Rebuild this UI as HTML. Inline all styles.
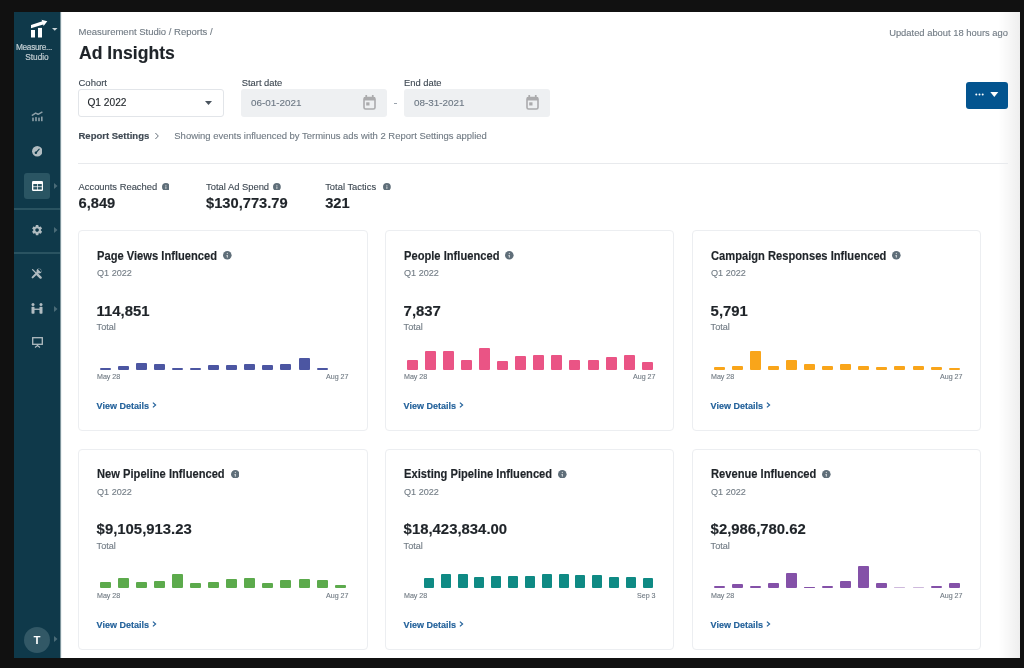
<!DOCTYPE html>
<html><head><meta charset="utf-8">
<style>
html,body{margin:0;padding:0;}
body{width:1024px;height:668px;background:#111;position:relative;overflow:hidden;font-family:"Liberation Sans",sans-serif;}
.t{position:absolute;line-height:1;white-space:nowrap;}
.a{position:absolute;display:block;}
.main{position:absolute;left:60px;top:12px;width:960px;height:646px;background:#fff;}
.shade{position:absolute;left:998px;top:12px;width:22px;height:646px;background:linear-gradient(to right,rgba(0,0,0,0),rgba(0,0,0,0.065));}
.side{position:absolute;left:14px;top:12px;width:46px;height:646px;background:#0f394a;}
.card{position:absolute;width:288px;height:199px;border:1px solid #eceef1;border-radius:4px;background:#fff;}
.bar{position:absolute;border-radius:1px;}
</style></head><body>
<div id="wrap" style="position:absolute;left:0;top:0;width:1024px;height:668px;filter:blur(0.35px)">
<div class="main"></div>
<div class="shade"></div>
<div class="side"></div>
<div class="a" style="left:60px;top:12px;width:1px;height:646px;background:#7d949c"></div>
<div class="a" style="left:61px;top:12px;width:1px;height:646px;background:#eef2f3"></div>
<div class="t" style="left:78.50px;top:26.76px;font-size:9.5px;color:#717b84;-webkit-text-stroke:0.12px currentColor;">Measurement Studio / Reports /</div>
<div class="t" style="left:78.50px;top:44.73px;font-size:17.8px;color:#1f2429;font-weight:700;transform:scale(0.99,1.0);transform-origin:0 15.07px;-webkit-text-stroke:0.15px currentColor;">Ad Insights</div>
<div class="t" style="right:16.00px;top:27.84px;font-size:9.4px;color:#717b84;-webkit-text-stroke:0.12px currentColor;">Updated about 18 hours ago</div>
<div class="t" style="left:78.50px;top:78.16px;font-size:9.5px;color:#3f4953;-webkit-text-stroke:0.12px currentColor;">Cohort</div>
<div class="t" style="left:241.70px;top:78.24px;font-size:9.4px;color:#3f4953;-webkit-text-stroke:0.12px currentColor;">Start date</div>
<div class="t" style="left:404.00px;top:78.24px;font-size:9.4px;color:#3f4953;-webkit-text-stroke:0.12px currentColor;">End date</div>
<div class="a" style="left:78px;top:89px;width:144px;height:25.5px;border:1px solid #e2e5e9;border-radius:3px;background:#fff"></div>
<div class="t" style="left:87.40px;top:97.87px;font-size:10.2px;color:#1f2429;-webkit-text-stroke:0.12px currentColor;">Q1 2022</div>
<svg class="a" style="left:205.2px;top:101.3px" width="7" height="4" viewBox="0 0 7 4"><path d="M0 0H7L3.5 4Z" fill="#4a545e"/></svg>
<div class="a" style="left:241px;top:89px;width:146px;height:27.5px;border-radius:3px;background:#eef0f2"></div>
<div class="t" style="left:251.00px;top:98.12px;font-size:9.9px;color:#6d7884;-webkit-text-stroke:0.12px currentColor;">06-01-2021</div>
<svg class="a" style="left:362.70px;top:95px" width="13" height="15" viewBox="0 0 13 15"><rect x="1" y="2.5" width="11" height="11.5" rx="1.6" fill="none" stroke="#ababad" stroke-width="1.6"/><rect x="1" y="2" width="11" height="3.5" fill="#ababad"/><rect x="2.4" y="0" width="1.7" height="3" fill="#ababad"/><rect x="8.9" y="0" width="1.7" height="3" fill="#ababad"/><rect x="3.2" y="7.3" width="3.3" height="3.2" fill="#ababad"/></svg>
<div class="a" style="left:404px;top:89px;width:146px;height:27.5px;border-radius:3px;background:#eef0f2"></div>
<div class="t" style="left:414.00px;top:98.12px;font-size:9.9px;color:#6d7884;-webkit-text-stroke:0.12px currentColor;">08-31-2021</div>
<svg class="a" style="left:525.70px;top:95px" width="13" height="15" viewBox="0 0 13 15"><rect x="1" y="2.5" width="11" height="11.5" rx="1.6" fill="none" stroke="#ababad" stroke-width="1.6"/><rect x="1" y="2" width="11" height="3.5" fill="#ababad"/><rect x="2.4" y="0" width="1.7" height="3" fill="#ababad"/><rect x="8.9" y="0" width="1.7" height="3" fill="#ababad"/><rect x="3.2" y="7.3" width="3.3" height="3.2" fill="#ababad"/></svg>
<div class="a" style="left:394px;top:102.5px;width:3px;height:1px;background:#9aa3ad"></div>
<div class="a" style="left:966px;top:82px;width:42px;height:27px;border-radius:3px;background:#03548f"></div>
<svg class="a" style="left:975px;top:92px" width="24" height="8" viewBox="0 0 24 8"><circle cx="1.3" cy="2.5" r="1" fill="#fff"/><circle cx="4.5" cy="2.5" r="1" fill="#fff"/><circle cx="7.7" cy="2.5" r="1" fill="#fff"/><path d="M15.3 0H23.3L19.3 5Z" fill="#fff"/></svg>
<div class="t" style="left:78.50px;top:131.16px;font-size:9.5px;color:#3f4953;font-weight:700;-webkit-text-stroke:0.15px currentColor;">Report Settings</div>
<svg class="a" style="left:153.5px;top:131.5px" width="6" height="8" viewBox="0 0 6 8"><path d="M1.4 1L4.3 4L1.4 7" fill="none" stroke="#66707a" stroke-width="1"/></svg>
<div class="t" style="left:174.30px;top:131.18px;font-size:9.47px;color:#717b84;-webkit-text-stroke:0.12px currentColor;">Showing events influenced by Terminus ads with 2 Report Settings applied</div>
<div class="a" style="left:78px;top:163px;width:930px;height:1px;background:#e8eaed"></div>
<div class="t" style="left:78.50px;top:182.04px;font-size:9.4px;color:#3f4953;-webkit-text-stroke:0.12px currentColor;">Accounts Reached</div>
<svg class="a" style="left:161.50px;top:182.60px" width="7.8" height="7.8" viewBox="0 0 16 16"><circle cx="8" cy="8" r="8" fill="#5f6e79"/><rect x="7.1" y="6.8" width="1.8" height="5.6" rx="0.9" fill="#fff" fill-opacity="0.85"/><circle cx="8" cy="4.4" r="1.05" fill="#fff" fill-opacity="0.85"/></svg>
<div class="t" style="left:78.50px;top:196.46px;font-size:14.7px;color:#1f2429;font-weight:700;-webkit-text-stroke:0.15px currentColor;">6,849</div>
<div class="t" style="left:206.00px;top:182.04px;font-size:9.4px;color:#3f4953;-webkit-text-stroke:0.12px currentColor;">Total Ad Spend</div>
<svg class="a" style="left:273.40px;top:182.60px" width="7.8" height="7.8" viewBox="0 0 16 16"><circle cx="8" cy="8" r="8" fill="#5f6e79"/><rect x="7.1" y="6.8" width="1.8" height="5.6" rx="0.9" fill="#fff" fill-opacity="0.85"/><circle cx="8" cy="4.4" r="1.05" fill="#fff" fill-opacity="0.85"/></svg>
<div class="t" style="left:206.00px;top:196.46px;font-size:14.7px;color:#1f2429;font-weight:700;-webkit-text-stroke:0.15px currentColor;">$130,773.79</div>
<div class="t" style="left:325.20px;top:182.04px;font-size:9.4px;color:#3f4953;-webkit-text-stroke:0.12px currentColor;">Total Tactics</div>
<svg class="a" style="left:382.80px;top:182.60px" width="7.8" height="7.8" viewBox="0 0 16 16"><circle cx="8" cy="8" r="8" fill="#5f6e79"/><rect x="7.1" y="6.8" width="1.8" height="5.6" rx="0.9" fill="#fff" fill-opacity="0.85"/><circle cx="8" cy="4.4" r="1.05" fill="#fff" fill-opacity="0.85"/></svg>
<div class="t" style="left:325.20px;top:196.46px;font-size:14.7px;color:#1f2429;font-weight:700;-webkit-text-stroke:0.15px currentColor;">321</div>
<div class="card" style="left:78px;top:230px;width:288px"></div>
<div class="t ttl" style="left:96.60px;top:250.67px;font-size:11.5px;color:#1f2429;font-weight:700;transform:scale(0.97,1.06);transform-origin:0 9.73px;-webkit-text-stroke:0.15px currentColor;">Page Views Influenced</div>
<svg class="a" style="left:223.05px;top:251.10px" width="8.6" height="8.6" viewBox="0 0 16 16"><circle cx="8" cy="8" r="8" fill="#5f6e79"/><rect x="7.1" y="6.8" width="1.8" height="5.6" rx="0.9" fill="#fff" fill-opacity="0.85"/><circle cx="8" cy="4.4" r="1.05" fill="#fff" fill-opacity="0.85"/></svg>
<div class="t" style="left:96.60px;top:268.24px;font-size:9.4px;color:#717b84;transform:scale(0.97,1.0);transform-origin:0 7.96px;-webkit-text-stroke:0.12px currentColor;">Q1 2022</div>
<div class="t" style="left:96.60px;top:303.59px;font-size:14.9px;color:#1f2429;font-weight:700;-webkit-text-stroke:0.15px currentColor;">114,851</div>
<div class="t" style="left:96.60px;top:322.90px;font-size:9.1px;color:#717b84;-webkit-text-stroke:0.12px currentColor;">Total</div>
<div class="bar" style="left:100px;top:368px;width:11px;height:2px;background:#4c56a2;"></div>
<div class="bar" style="left:118px;top:366px;width:11px;height:4px;background:#4c56a2;"></div>
<div class="bar" style="left:136px;top:363px;width:11px;height:7px;background:#4c56a2;"></div>
<div class="bar" style="left:154px;top:364px;width:11px;height:6px;background:#4c56a2;"></div>
<div class="bar" style="left:172px;top:368px;width:11px;height:2px;background:#4c56a2;"></div>
<div class="bar" style="left:190px;top:368px;width:11px;height:2px;background:#4c56a2;"></div>
<div class="bar" style="left:208px;top:365px;width:11px;height:5px;background:#4c56a2;"></div>
<div class="bar" style="left:226px;top:365px;width:11px;height:5px;background:#4c56a2;"></div>
<div class="bar" style="left:244px;top:364px;width:11px;height:6px;background:#4c56a2;"></div>
<div class="bar" style="left:262px;top:365px;width:11px;height:5px;background:#4c56a2;"></div>
<div class="bar" style="left:280px;top:364px;width:11px;height:6px;background:#4c56a2;"></div>
<div class="bar" style="left:299px;top:358px;width:11px;height:12px;background:#4c56a2;"></div>
<div class="bar" style="left:317px;top:368px;width:11px;height:2px;background:#4c56a2;"></div>
<div class="t" style="left:97.00px;top:374.29px;font-size:7.1px;color:#717b84;-webkit-text-stroke:0.12px currentColor;">May 28</div>
<div class="t" style="right:675.50px;top:374.29px;font-size:7.1px;color:#717b84;-webkit-text-stroke:0.12px currentColor;">Aug 27</div>
<div class="t" style="left:96.60px;top:402.18px;font-size:9px;color:#24629b;font-weight:700;-webkit-text-stroke:0.15px currentColor;">View Details</div>
<svg class="a" style="left:151.80px;top:402.20px" width="5" height="6" viewBox="0 0 5 6"><path d="M0.9 0.6L3.6 3L0.9 5.4" fill="none" stroke="#24629b" stroke-width="1.2"/></svg>
<div class="card" style="left:385px;top:230px;width:287px"></div>
<div class="t ttl" style="left:403.60px;top:250.67px;font-size:11.5px;color:#1f2429;font-weight:700;transform:scale(0.97,1.06);transform-origin:0 9.73px;-webkit-text-stroke:0.15px currentColor;">People Influenced</div>
<svg class="a" style="left:505.45px;top:251.10px" width="8.6" height="8.6" viewBox="0 0 16 16"><circle cx="8" cy="8" r="8" fill="#5f6e79"/><rect x="7.1" y="6.8" width="1.8" height="5.6" rx="0.9" fill="#fff" fill-opacity="0.85"/><circle cx="8" cy="4.4" r="1.05" fill="#fff" fill-opacity="0.85"/></svg>
<div class="t" style="left:403.60px;top:268.24px;font-size:9.4px;color:#717b84;transform:scale(0.97,1.0);transform-origin:0 7.96px;-webkit-text-stroke:0.12px currentColor;">Q1 2022</div>
<div class="t" style="left:403.60px;top:303.59px;font-size:14.9px;color:#1f2429;font-weight:700;-webkit-text-stroke:0.15px currentColor;">7,837</div>
<div class="t" style="left:403.60px;top:322.90px;font-size:9.1px;color:#717b84;-webkit-text-stroke:0.12px currentColor;">Total</div>
<div class="bar" style="left:407px;top:360px;width:11px;height:10px;background:#ea5485;"></div>
<div class="bar" style="left:425px;top:351px;width:11px;height:19px;background:#ea5485;"></div>
<div class="bar" style="left:443px;top:351px;width:11px;height:19px;background:#ea5485;"></div>
<div class="bar" style="left:461px;top:360px;width:11px;height:10px;background:#ea5485;"></div>
<div class="bar" style="left:479px;top:348px;width:11px;height:22px;background:#ea5485;"></div>
<div class="bar" style="left:497px;top:361px;width:11px;height:9px;background:#ea5485;"></div>
<div class="bar" style="left:515px;top:356px;width:11px;height:14px;background:#ea5485;"></div>
<div class="bar" style="left:533px;top:355px;width:11px;height:15px;background:#ea5485;"></div>
<div class="bar" style="left:551px;top:355px;width:11px;height:15px;background:#ea5485;"></div>
<div class="bar" style="left:569px;top:360px;width:11px;height:10px;background:#ea5485;"></div>
<div class="bar" style="left:588px;top:360px;width:11px;height:10px;background:#ea5485;"></div>
<div class="bar" style="left:606px;top:357px;width:11px;height:13px;background:#ea5485;"></div>
<div class="bar" style="left:624px;top:355px;width:11px;height:15px;background:#ea5485;"></div>
<div class="bar" style="left:642px;top:362px;width:11px;height:8px;background:#ea5485;"></div>
<div class="t" style="left:404.00px;top:374.29px;font-size:7.1px;color:#717b84;-webkit-text-stroke:0.12px currentColor;">May 28</div>
<div class="t" style="right:368.50px;top:374.29px;font-size:7.1px;color:#717b84;-webkit-text-stroke:0.12px currentColor;">Aug 27</div>
<div class="t" style="left:403.60px;top:402.18px;font-size:9px;color:#24629b;font-weight:700;-webkit-text-stroke:0.15px currentColor;">View Details</div>
<svg class="a" style="left:458.80px;top:402.20px" width="5" height="6" viewBox="0 0 5 6"><path d="M0.9 0.6L3.6 3L0.9 5.4" fill="none" stroke="#24629b" stroke-width="1.2"/></svg>
<div class="card" style="left:692px;top:230px;width:287px"></div>
<div class="t ttl" style="left:710.60px;top:250.67px;font-size:11.5px;color:#1f2429;font-weight:700;transform:scale(0.97,1.06);transform-origin:0 9.73px;-webkit-text-stroke:0.15px currentColor;">Campaign Responses Influenced</div>
<svg class="a" style="left:892.41px;top:251.10px" width="8.6" height="8.6" viewBox="0 0 16 16"><circle cx="8" cy="8" r="8" fill="#5f6e79"/><rect x="7.1" y="6.8" width="1.8" height="5.6" rx="0.9" fill="#fff" fill-opacity="0.85"/><circle cx="8" cy="4.4" r="1.05" fill="#fff" fill-opacity="0.85"/></svg>
<div class="t" style="left:710.60px;top:268.24px;font-size:9.4px;color:#717b84;transform:scale(0.97,1.0);transform-origin:0 7.96px;-webkit-text-stroke:0.12px currentColor;">Q1 2022</div>
<div class="t" style="left:710.60px;top:303.59px;font-size:14.9px;color:#1f2429;font-weight:700;-webkit-text-stroke:0.15px currentColor;">5,791</div>
<div class="t" style="left:710.60px;top:322.90px;font-size:9.1px;color:#717b84;-webkit-text-stroke:0.12px currentColor;">Total</div>
<div class="bar" style="left:714px;top:367px;width:11px;height:3px;background:#f9a51a;"></div>
<div class="bar" style="left:732px;top:366px;width:11px;height:4px;background:#f9a51a;"></div>
<div class="bar" style="left:750px;top:351px;width:11px;height:19px;background:#f9a51a;"></div>
<div class="bar" style="left:768px;top:366px;width:11px;height:4px;background:#f9a51a;"></div>
<div class="bar" style="left:786px;top:360px;width:11px;height:10px;background:#f9a51a;"></div>
<div class="bar" style="left:804px;top:364px;width:11px;height:6px;background:#f9a51a;"></div>
<div class="bar" style="left:822px;top:366px;width:11px;height:4px;background:#f9a51a;"></div>
<div class="bar" style="left:840px;top:364px;width:11px;height:6px;background:#f9a51a;"></div>
<div class="bar" style="left:858px;top:366px;width:11px;height:4px;background:#f9a51a;"></div>
<div class="bar" style="left:876px;top:367px;width:11px;height:3px;background:#f9a51a;"></div>
<div class="bar" style="left:894px;top:366px;width:11px;height:4px;background:#f9a51a;"></div>
<div class="bar" style="left:913px;top:366px;width:11px;height:4px;background:#f9a51a;"></div>
<div class="bar" style="left:931px;top:367px;width:11px;height:3px;background:#f9a51a;"></div>
<div class="bar" style="left:949px;top:368px;width:11px;height:2px;background:#f9a51a;"></div>
<div class="t" style="left:711.00px;top:374.29px;font-size:7.1px;color:#717b84;-webkit-text-stroke:0.12px currentColor;">May 28</div>
<div class="t" style="right:61.50px;top:374.29px;font-size:7.1px;color:#717b84;-webkit-text-stroke:0.12px currentColor;">Aug 27</div>
<div class="t" style="left:710.60px;top:402.18px;font-size:9px;color:#24629b;font-weight:700;-webkit-text-stroke:0.15px currentColor;">View Details</div>
<svg class="a" style="left:765.80px;top:402.20px" width="5" height="6" viewBox="0 0 5 6"><path d="M0.9 0.6L3.6 3L0.9 5.4" fill="none" stroke="#24629b" stroke-width="1.2"/></svg>
<div class="card" style="left:78px;top:449px;width:288px"></div>
<div class="t ttl" style="left:96.60px;top:469.27px;font-size:11.5px;color:#1f2429;font-weight:700;transform:scale(0.97,1.06);transform-origin:0 9.73px;-webkit-text-stroke:0.15px currentColor;">New Pipeline Influenced</div>
<svg class="a" style="left:230.68px;top:469.70px" width="8.6" height="8.6" viewBox="0 0 16 16"><circle cx="8" cy="8" r="8" fill="#5f6e79"/><rect x="7.1" y="6.8" width="1.8" height="5.6" rx="0.9" fill="#fff" fill-opacity="0.85"/><circle cx="8" cy="4.4" r="1.05" fill="#fff" fill-opacity="0.85"/></svg>
<div class="t" style="left:96.60px;top:486.84px;font-size:9.4px;color:#717b84;transform:scale(0.97,1.0);transform-origin:0 7.96px;-webkit-text-stroke:0.12px currentColor;">Q1 2022</div>
<div class="t" style="left:96.60px;top:522.19px;font-size:14.9px;color:#1f2429;font-weight:700;-webkit-text-stroke:0.15px currentColor;">$9,105,913.23</div>
<div class="t" style="left:96.60px;top:541.50px;font-size:9.1px;color:#717b84;-webkit-text-stroke:0.12px currentColor;">Total</div>
<div class="bar" style="left:100px;top:582px;width:11px;height:6px;background:#5caa4c;"></div>
<div class="bar" style="left:118px;top:578px;width:11px;height:10px;background:#5caa4c;"></div>
<div class="bar" style="left:136px;top:582px;width:11px;height:6px;background:#5caa4c;"></div>
<div class="bar" style="left:154px;top:581px;width:11px;height:7px;background:#5caa4c;"></div>
<div class="bar" style="left:172px;top:574px;width:11px;height:14px;background:#5caa4c;"></div>
<div class="bar" style="left:190px;top:583px;width:11px;height:5px;background:#5caa4c;"></div>
<div class="bar" style="left:208px;top:582px;width:11px;height:6px;background:#5caa4c;"></div>
<div class="bar" style="left:226px;top:579px;width:11px;height:9px;background:#5caa4c;"></div>
<div class="bar" style="left:244px;top:578px;width:11px;height:10px;background:#5caa4c;"></div>
<div class="bar" style="left:262px;top:583px;width:11px;height:5px;background:#5caa4c;"></div>
<div class="bar" style="left:280px;top:580px;width:11px;height:8px;background:#5caa4c;"></div>
<div class="bar" style="left:299px;top:579px;width:11px;height:9px;background:#5caa4c;"></div>
<div class="bar" style="left:317px;top:580px;width:11px;height:8px;background:#5caa4c;"></div>
<div class="bar" style="left:335px;top:585px;width:11px;height:3px;background:#5caa4c;"></div>
<div class="t" style="left:97.00px;top:592.89px;font-size:7.1px;color:#717b84;-webkit-text-stroke:0.12px currentColor;">May 28</div>
<div class="t" style="right:675.50px;top:592.89px;font-size:7.1px;color:#717b84;-webkit-text-stroke:0.12px currentColor;">Aug 27</div>
<div class="t" style="left:96.60px;top:620.78px;font-size:9px;color:#24629b;font-weight:700;-webkit-text-stroke:0.15px currentColor;">View Details</div>
<svg class="a" style="left:151.80px;top:620.80px" width="5" height="6" viewBox="0 0 5 6"><path d="M0.9 0.6L3.6 3L0.9 5.4" fill="none" stroke="#24629b" stroke-width="1.2"/></svg>
<div class="card" style="left:385px;top:449px;width:287px"></div>
<div class="t ttl" style="left:403.60px;top:469.27px;font-size:11.5px;color:#1f2429;font-weight:700;transform:scale(0.97,1.06);transform-origin:0 9.73px;-webkit-text-stroke:0.15px currentColor;">Existing Pipeline Influenced</div>
<svg class="a" style="left:558.13px;top:469.70px" width="8.6" height="8.6" viewBox="0 0 16 16"><circle cx="8" cy="8" r="8" fill="#5f6e79"/><rect x="7.1" y="6.8" width="1.8" height="5.6" rx="0.9" fill="#fff" fill-opacity="0.85"/><circle cx="8" cy="4.4" r="1.05" fill="#fff" fill-opacity="0.85"/></svg>
<div class="t" style="left:403.60px;top:486.84px;font-size:9.4px;color:#717b84;transform:scale(0.97,1.0);transform-origin:0 7.96px;-webkit-text-stroke:0.12px currentColor;">Q1 2022</div>
<div class="t" style="left:403.60px;top:522.19px;font-size:14.9px;color:#1f2429;font-weight:700;-webkit-text-stroke:0.15px currentColor;">$18,423,834.00</div>
<div class="t" style="left:403.60px;top:541.50px;font-size:9.1px;color:#717b84;-webkit-text-stroke:0.12px currentColor;">Total</div>
<div class="bar" style="left:424px;top:578px;width:10px;height:10px;background:#0f8a84;"></div>
<div class="bar" style="left:441px;top:574px;width:10px;height:14px;background:#0f8a84;"></div>
<div class="bar" style="left:458px;top:574px;width:10px;height:14px;background:#0f8a84;"></div>
<div class="bar" style="left:474px;top:577px;width:10px;height:11px;background:#0f8a84;"></div>
<div class="bar" style="left:491px;top:576px;width:10px;height:12px;background:#0f8a84;"></div>
<div class="bar" style="left:508px;top:576px;width:10px;height:12px;background:#0f8a84;"></div>
<div class="bar" style="left:525px;top:576px;width:10px;height:12px;background:#0f8a84;"></div>
<div class="bar" style="left:542px;top:574px;width:10px;height:14px;background:#0f8a84;"></div>
<div class="bar" style="left:559px;top:574px;width:10px;height:14px;background:#0f8a84;"></div>
<div class="bar" style="left:575px;top:575px;width:10px;height:13px;background:#0f8a84;"></div>
<div class="bar" style="left:592px;top:575px;width:10px;height:13px;background:#0f8a84;"></div>
<div class="bar" style="left:609px;top:577px;width:10px;height:11px;background:#0f8a84;"></div>
<div class="bar" style="left:626px;top:577px;width:10px;height:11px;background:#0f8a84;"></div>
<div class="bar" style="left:643px;top:578px;width:10px;height:10px;background:#0f8a84;"></div>
<div class="t" style="left:404.00px;top:592.89px;font-size:7.1px;color:#717b84;-webkit-text-stroke:0.12px currentColor;">May 28</div>
<div class="t" style="right:368.50px;top:592.89px;font-size:7.1px;color:#717b84;-webkit-text-stroke:0.12px currentColor;">Sep 3</div>
<div class="t" style="left:403.60px;top:620.78px;font-size:9px;color:#24629b;font-weight:700;-webkit-text-stroke:0.15px currentColor;">View Details</div>
<svg class="a" style="left:458.80px;top:620.80px" width="5" height="6" viewBox="0 0 5 6"><path d="M0.9 0.6L3.6 3L0.9 5.4" fill="none" stroke="#24629b" stroke-width="1.2"/></svg>
<div class="card" style="left:692px;top:449px;width:287px"></div>
<div class="t ttl" style="left:710.60px;top:469.27px;font-size:11.5px;color:#1f2429;font-weight:700;transform:scale(0.97,1.06);transform-origin:0 9.73px;-webkit-text-stroke:0.15px currentColor;">Revenue Influenced</div>
<svg class="a" style="left:822.37px;top:469.70px" width="8.6" height="8.6" viewBox="0 0 16 16"><circle cx="8" cy="8" r="8" fill="#5f6e79"/><rect x="7.1" y="6.8" width="1.8" height="5.6" rx="0.9" fill="#fff" fill-opacity="0.85"/><circle cx="8" cy="4.4" r="1.05" fill="#fff" fill-opacity="0.85"/></svg>
<div class="t" style="left:710.60px;top:486.84px;font-size:9.4px;color:#717b84;transform:scale(0.97,1.0);transform-origin:0 7.96px;-webkit-text-stroke:0.12px currentColor;">Q1 2022</div>
<div class="t" style="left:710.60px;top:522.19px;font-size:14.9px;color:#1f2429;font-weight:700;-webkit-text-stroke:0.15px currentColor;">$2,986,780.62</div>
<div class="t" style="left:710.60px;top:541.50px;font-size:9.1px;color:#717b84;-webkit-text-stroke:0.12px currentColor;">Total</div>
<div class="bar" style="left:714px;top:586px;width:11px;height:2px;background:#8451a8;"></div>
<div class="bar" style="left:732px;top:584px;width:11px;height:4px;background:#8451a8;"></div>
<div class="bar" style="left:750px;top:586px;width:11px;height:2px;background:#8451a8;"></div>
<div class="bar" style="left:768px;top:583px;width:11px;height:5px;background:#8451a8;"></div>
<div class="bar" style="left:786px;top:573px;width:11px;height:15px;background:#8451a8;"></div>
<div class="bar" style="left:804px;top:587px;width:11px;height:1px;background:#8451a8;"></div>
<div class="bar" style="left:822px;top:586px;width:11px;height:2px;background:#8451a8;"></div>
<div class="bar" style="left:840px;top:581px;width:11px;height:7px;background:#8451a8;"></div>
<div class="bar" style="left:858px;top:566px;width:11px;height:22px;background:#8451a8;"></div>
<div class="bar" style="left:876px;top:583px;width:11px;height:5px;background:#8451a8;"></div>
<div class="bar" style="left:894px;top:587px;width:11px;height:1px;background:#8451a8;opacity:0.4;"></div>
<div class="bar" style="left:913px;top:587px;width:11px;height:1px;background:#8451a8;opacity:0.4;"></div>
<div class="bar" style="left:931px;top:586px;width:11px;height:2px;background:#8451a8;"></div>
<div class="bar" style="left:949px;top:583px;width:11px;height:5px;background:#8451a8;"></div>
<div class="t" style="left:711.00px;top:592.89px;font-size:7.1px;color:#717b84;-webkit-text-stroke:0.12px currentColor;">May 28</div>
<div class="t" style="right:61.50px;top:592.89px;font-size:7.1px;color:#717b84;-webkit-text-stroke:0.12px currentColor;">Aug 27</div>
<div class="t" style="left:710.60px;top:620.78px;font-size:9px;color:#24629b;font-weight:700;-webkit-text-stroke:0.15px currentColor;">View Details</div>
<svg class="a" style="left:765.80px;top:620.80px" width="5" height="6" viewBox="0 0 5 6"><path d="M0.9 0.6L3.6 3L0.9 5.4" fill="none" stroke="#24629b" stroke-width="1.2"/></svg>
<svg class="a" style="left:30px;top:19px" width="19" height="20" viewBox="0 0 19 20"><path d="M1 5.9L12.3 2.3L11.4 0.8L17.3 2.2L13.6 7L13.2 5.6L1 9.2Z" fill="#fff"/><rect x="1" y="11" width="4" height="7.5" fill="#fff"/><rect x="8" y="8.9" width="4" height="9.6" fill="#fff"/></svg>
<svg class="a" style="left:52px;top:27.8px" width="6" height="3" viewBox="0 0 6 3"><path d="M0 0H5.5L2.75 2.8Z" fill="#c9d3d8"/></svg>
<div class="t" style="left:15.90px;top:43.17px;font-size:8.3px;color:#c0ccd1;-webkit-text-stroke:0.12px currentColor;letter-spacing:-0.3px;-webkit-text-stroke:0.2px #c0ccd1;">Measure...</div>
<div class="t" style="left:25.20px;top:53.27px;font-size:8.3px;color:#c0ccd1;-webkit-text-stroke:0.12px currentColor;-webkit-text-stroke:0.2px #c0ccd1;">Studio</div>
<svg class="a" style="left:31px;top:110.5px" width="12" height="11" viewBox="0 0 12 11"><path d="M0.8 4.6L4.6 2.1L7.1 3.3L11.4 0.9" fill="none" stroke="#8d9fa7" stroke-width="1.5" stroke-linejoin="round"/><rect x="1.2" y="6.6" width="1.6" height="3.6" fill="#8d9fa7"/><rect x="4.2" y="6.1" width="1.6" height="4.1" fill="#8d9fa7"/><rect x="7.2" y="6.6" width="1.6" height="3.6" fill="#8d9fa7"/><rect x="10.0" y="5.6" width="1.6" height="4.6" fill="#8d9fa7"/></svg>
<svg class="a" style="left:31.8px;top:146.1px" width="10.5" height="10.5" viewBox="0 0 10.5 10.5"><circle cx="5.25" cy="5.25" r="5.2" fill="#b1bcc1"/><path d="M4 6.6L7.2 3.1" stroke="#0d3a4a" stroke-width="1.1" stroke-linecap="round"/><circle cx="3.9" cy="6.7" r="1.25" fill="#0d3a4a"/></svg>
<div class="a" style="left:24px;top:173px;width:26px;height:26px;border-radius:3px;background:#2a5563"></div>
<svg class="a" style="left:31.5px;top:181px" width="11" height="10" viewBox="0 0 11 10"><rect x="0" y="0" width="11" height="10" rx="1.2" fill="#fff"/><rect x="1.3" y="3" width="3.9" height="2.4" fill="#2a5563"/><rect x="5.9" y="3" width="3.9" height="2.4" fill="#2a5563"/><rect x="1.3" y="6.1" width="3.9" height="2.4" fill="#2a5563"/><rect x="5.9" y="6.1" width="3.9" height="2.4" fill="#2a5563"/></svg>
<svg class="a" style="left:53.5px;top:183px" width="4" height="6" viewBox="0 0 4 6"><path d="M0 0L3.5 3L0 6Z" fill="#4a6b77"/></svg>
<svg class="a" style="left:53.5px;top:227px" width="4" height="6" viewBox="0 0 4 6"><path d="M0 0L3.5 3L0 6Z" fill="#4a6b77"/></svg>
<svg class="a" style="left:53.5px;top:306px" width="4" height="6" viewBox="0 0 4 6"><path d="M0 0L3.5 3L0 6Z" fill="#4a6b77"/></svg>
<svg class="a" style="left:53.5px;top:636px" width="4" height="6" viewBox="0 0 4 6"><path d="M0 0L3.5 3L0 6Z" fill="#4a6b77"/></svg>
<div class="a" style="left:14px;top:208px;width:46px;height:2px;background:#2a5361"></div>
<div class="a" style="left:14px;top:252px;width:46px;height:2px;background:#2a5361"></div>
<svg class="a" style="left:30.8px;top:223.6px" width="12.2" height="12.2" viewBox="0 0 24 24"><path fill="#b1bcc1" d="M19.4 13c.04-.33.06-.66.06-1s-.02-.67-.06-1l2.1-1.65c.19-.15.24-.42.12-.64l-2-3.46c-.12-.22-.39-.3-.61-.22l-2.49 1c-.52-.4-1.08-.73-1.69-.98l-.38-2.65C14.46 2.18 14.25 2 14 2h-4c-.25 0-.46.18-.49.42l-.38 2.65c-.61.25-1.17.59-1.69.98l-2.49-1c-.23-.09-.49 0-.61.22l-2 3.46c-.13.22-.07.49.12.64L4.57 11c-.04.33-.07.67-.07 1s.03.67.07 1l-2.1 1.65c-.19.15-.24.42-.12.64l2 3.46c.12.22.39.3.61.22l2.49-1c.52.4 1.08.73 1.69.98l.38 2.65c.03.24.24.42.49.42h4c.25 0 .46-.18.49-.42l.38-2.65c.61-.25 1.17-.59 1.69-.98l2.49 1c.23.09.49 0 .61-.22l2-3.46c.12-.22.07-.49-.12-.64L19.4 13zM12 15.5c-1.93 0-3.5-1.57-3.5-3.5s1.57-3.5 3.5-3.5 3.5 1.57 3.5 3.5-1.57 3.5-3.5 3.5z"/></svg>
<svg class="a" style="left:31.4px;top:267.8px" width="11" height="11" viewBox="0 0 11 11"><path d="M1.6 1.6L6.5 6.5" stroke="#b1bcc1" stroke-width="1.3" stroke-linecap="round"/><path d="M6.3 6.3L9.6 9.6" stroke="#b1bcc1" stroke-width="2.4" stroke-linecap="round"/><path d="M1.6 9.4L6.8 4.2" stroke="#b1bcc1" stroke-width="2" stroke-linecap="round"/><circle cx="8" cy="3" r="2.5" fill="#b1bcc1"/><path d="M8.2 0.2L10.8 2.8L9.6 4L7 1.4Z" fill="#0f394a"/></svg>
<svg class="a" style="left:31.2px;top:302.7px" width="12" height="11" viewBox="0 0 12 11"><circle cx="2" cy="1.6" r="1.5" fill="#b1bcc1"/><circle cx="10" cy="1.6" r="1.5" fill="#b1bcc1"/><rect x="0.5" y="3.8" width="3" height="7" rx="0.8" fill="#b1bcc1"/><rect x="8.5" y="3.8" width="3" height="7" rx="0.8" fill="#b1bcc1"/><rect x="3" y="5.6" width="6" height="1.3" fill="#b1bcc1"/></svg>
<svg class="a" style="left:31.8px;top:336.6px" width="11" height="11" viewBox="0 0 11 11"><rect x="0.7" y="0.7" width="9.6" height="6.6" fill="none" stroke="#b1bcc1" stroke-width="1.3"/><path d="M5.5 7.5V9.5M3 10.5L5.5 8.5L8 10.5" fill="none" stroke="#b1bcc1" stroke-width="1.1"/></svg>
<div class="a" style="left:24px;top:626.5px;width:26px;height:26px;border-radius:50%;background:#325866"></div>
<div class="t" style="left:33.80px;top:634.63px;font-size:10.6px;color:#fff;font-weight:700;-webkit-text-stroke:0.15px currentColor;">T</div>
</div></body></html>
